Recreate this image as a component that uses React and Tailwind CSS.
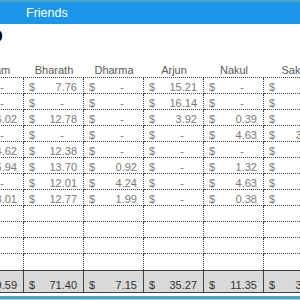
import React from "react";

const names = ["Sriram", "Bharath", "Dharma", "Arjun", "Nakul", "Saka"];

// one array per row, one entry per person; null = empty cell
const rows = [
    ["-", "7.76", "-", "15.21", "-", "-"],
    ["-", "-", "-", "16.14", "-", "-"],
    ["6.02", "12.78", "-", "3.92", "0.39", "-"],
    ["-", "-", "-", "-", "4.63", "3.15"],
    ["4.62", "12.38", "-", "-", "-", "-"],
    ["5.94", "13.70", "0.92", "-", "1.32", "-"],
    ["-", "12.01", "4.24", "-", "4.63", "-"],
    ["3.01", "12.77", "1.99", "-", "0.38", "-"],
    [null, null, null, null, null, null],
    [null, null, null, null, null, null],
    [null, null, null, null, null, null],
    [null, null, null, null, null, null],
];

const totals = ["19.59", "71.40", "7.15", "35.27", "11.35", "3.15"];

function Amount({ value }) {
    if (value === null) return null;
    return (
        <>
            <span>$</span>
            {value === "-" ? <span className="pr-[13px]">-</span> : <span>{value}</span>}
        </>
    );
}

export default function App() {
    return (
        <div className="w-[300px] h-[300px] overflow-hidden bg-white font-['Liberation_Sans',Arial,sans-serif]">
            <div className="h-[2px] bg-[#4ba4c4]" />
            <div className="h-[22px] bg-[#1a97ea] flex items-center pl-[26px] text-white text-[12.5px] leading-none">
                Friends
            </div>

            {/* sheet title, only its last letter shows */}
            <div className="h-[32px]">
                <div className="w-[3px] overflow-hidden flex justify-end">
                    <span className="whitespace-nowrap text-[22px] leading-[22px] font-bold text-black">Expense Memo</span>
                </div>
            </div>

            <div className="ml-[-36px] w-[360px]">
                {/* header */}
                <div className="flex h-[21px] items-end pb-[1px]">
                    {names.map((n) => (
                        <div key={n} className="w-[60px] text-center text-[11px] leading-[11px] text-[#595959]">
                            {n}
                        </div>
                    ))}
                </div>

                {/* entries */}
                <div className="border-t border-dotted border-[#444]">
                    {rows.map((row, i) => (
                        <div key={i} className="flex">
                            {row.map((v, j) => (
                                <div
                                    key={j}
                                    className={`w-[60px] h-[16px] border-r border-dotted border-[#444] flex items-end justify-between pl-[5px] pr-[6px] text-[11px] leading-[11px] text-[#7a7a7a] ${
                                        i < rows.length - 1 ? "border-b" : ""
                                    }`}
                                >
                                    <Amount value={v} />
                                </div>
                            ))}
                        </div>
                    ))}
                </div>

                {/* totals */}
                <div className="flex bg-[#d9d9d9] border-t border-b border-[#404040]">
                    {totals.map((t, j) => (
                        <div
                            key={j}
                            className="w-[60px] h-[21px] border-r border-[#404040] flex items-end justify-between pl-[5px] pr-[6px] pb-[1px] text-[11px] leading-[11px] text-[#333]"
                        >
                            <span>$</span>
                            <span>{t}</span>
                        </div>
                    ))}
                </div>
            </div>

            <div className="mt-[3px] h-[3px] bg-[#4ba4c4]" />
            <div className="h-[2px] bg-[#a9d4e4]" />
        </div>
    );
}
